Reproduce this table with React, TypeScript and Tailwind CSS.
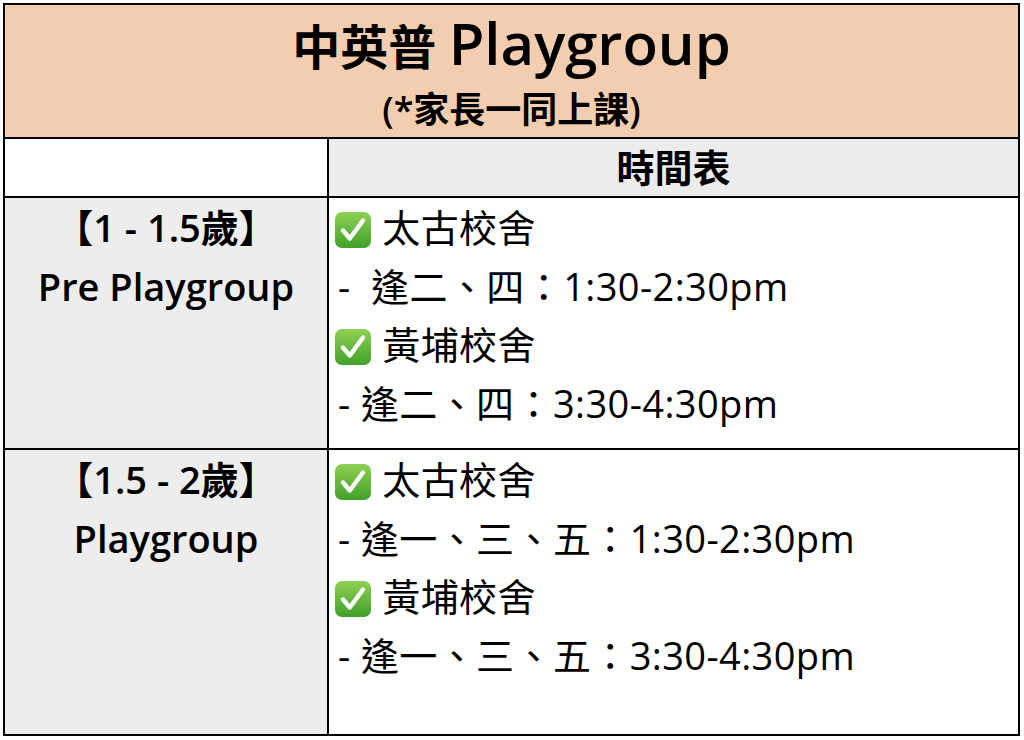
const font = "font-['Open_Sans','Noto_Sans_CJK_TC',sans-serif]";

function Check() {
  return (
    <svg
      width="38"
      height="38"
      viewBox="0 0 38 38"
      className="inline-block align-[-7px] ml-[-4px]"
    >
      <defs>
        <linearGradient id="ck" x1="0" y1="0" x2="0" y2="1">
          <stop offset="0" stopColor="#8fd154" />
          <stop offset="1" stopColor="#41a02a" />
        </linearGradient>
      </defs>
      <rect x="1" y="1" width="36" height="36" rx="7" fill="url(#ck)" />
      <path
        d="M9 19.5 L15.8 27.5 L29 9.5"
        fill="none"
        stroke="#fff"
        strokeWidth="4.4"
        strokeLinecap="round"
        strokeLinejoin="round"
      />
    </svg>
  );
}

type Block = { campus: string; time: string };

function Schedule({ items }: { items: Block[] }) {
  return (
    <div className="pl-[9px] text-[38px] leading-[58.67px] tracking-[0.4px] text-black">
      {items.map((it, i) => (
        <div key={i}>
          <div className="whitespace-pre">
            <Check /> {it.campus}
          </div>
          <div className="whitespace-pre">{it.time}</div>
        </div>
      ))}
    </div>
  );
}

function Age({ range, name }: { range: string; name: string }) {
  return (
    <div className="text-center text-[38px] font-semibold leading-[58.67px] text-black">
      <div>{range}</div>
      <div>{name}</div>
    </div>
  );
}

export default function App() {
  return (
    <div className={`min-h-[740px] w-[1024px] bg-white pl-[3px] pt-[3px] ${font}`}>
      <div className="w-[1017px] border-2 border-black">
        <div className="flex h-[134px] flex-col items-center border-b-2 border-black bg-[#f3cdb0] pt-[6px]">
          <div className="text-[48px] font-semibold leading-[64px] text-black">
            中英普 <span className="text-[58px]">Playgroup</span>
          </div>
          <div className="mt-[9px] text-[36px] font-semibold leading-[44px] text-black">(*家長一同上課)</div>
        </div>

        <div className="grid grid-cols-[324px_1fr]">
          <div className="h-[59px] border-b-2 border-r-2 border-black bg-white" />
          <div className="flex h-[59px] items-center justify-center border-b-2 border-black bg-[#ececec] text-[38px] font-semibold text-black">
            時間表
          </div>

          <div className="h-[252px] border-b-2 border-r-2 border-black bg-[#ededed]">
            <Age range="【1 - 1.5歲】" name="Pre Playgroup" />
          </div>
          <div className="h-[252px] border-b-2 border-black bg-white">
            <Schedule
              items={[
                { campus: "太古校舍", time: "-  逢二、四：1:30-2:30pm" },
                { campus: "黃埔校舍", time: "- 逢二、四：3:30-4:30pm" },
              ]}
            />
          </div>

          <div className="h-[284px] border-r-2 border-black bg-[#ededed]">
            <Age range="【1.5 - 2歲】" name="Playgroup" />
          </div>
          <div className="h-[284px] bg-white">
            <Schedule
              items={[
                { campus: "太古校舍", time: "- 逢一、三、五：1:30-2:30pm" },
                { campus: "黃埔校舍", time: "- 逢一、三、五：3:30-4:30pm" },
              ]}
            />
          </div>
        </div>
      </div>
    </div>
  );
}
